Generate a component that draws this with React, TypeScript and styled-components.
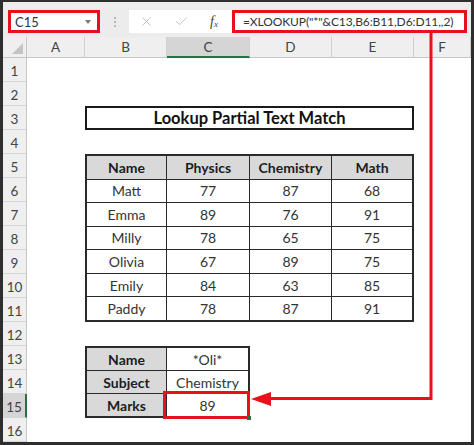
import React from 'react';
import styled, { createGlobalStyle } from 'styled-components';
import { X, Check, EllipsisVertical } from 'lucide-react';

const Global = createGlobalStyle`
  html, body { margin: 0; padding: 0; background: #2e2e2e; }
  body { font-family: Lato, "Open Sans", sans-serif; }
  * { box-sizing: border-box; }
`;

const Frame = styled.div`
  position: relative;
  width: 474px;
  height: 445px;
  padding: 2px 3px 3px 3px;
  background: #2e2e2e;
  display: flex;
  flex-direction: column;
`;

const Toolbar = styled.div`
  height: 35px;
  background: #ececec;
  display: flex;
  align-items: flex-start;
  padding: 8px 0 0 5px;
`;

const NameBox = styled.div`
  width: 92px;
  height: 23px;
  border: 3px solid #e8101a;
  background: #fff;
  display: flex;
  align-items: center;
  justify-content: space-between;
  padding: 0 6px 0 4px;
  font-size: 13px;
  color: #333;
`;

const Caret = styled.span`
  width: 0;
  height: 0;
  border-left: 3.5px solid transparent;
  border-right: 3.5px solid transparent;
  border-top: 4px solid #777;
`;

const Dots = styled.div`
  width: 29px;
  height: 23px;
  display: flex;
  align-items: center;
  justify-content: center;
  color: #b8b8b8;
`;

const FuncBox = styled.div`
  width: 103px;
  height: 23px;
  background: #fff;
  display: flex;
  align-items: center;
  padding-left: 10px;
  gap: 20px;
  color: #bdbdbd;
`;

const Fx = styled.span`
  font-family: "Liberation Serif", serif;
  font-style: italic;
  font-size: 14px;
  color: #444;
  margin-left: 1px;
  sub {
    font-size: 9px;
    vertical-align: -1px;
  }
`;

const FormulaBox = styled.div`
  width: 235px;
  height: 23px;
  border: 3px solid #e8101a;
  background: #fff;
  display: flex;
  align-items: center;
  padding-left: 8px;
  font-size: 12px;
  letter-spacing: -0.1px;
  color: #333;
  white-space: nowrap;
`;

const Sheet = styled.div`
  display: grid;
  grid-template-columns: 24px 58px 82px 83px 82px 82px 57px;
  grid-template-rows: 21px repeat(16, 24px);
  background: #fff;
`;

const ColHead = styled.div<{ $col: number; $sel?: boolean }>`
  grid-row: 1;
  grid-column: ${(p) => p.$col};
  background: ${(p) => (p.$sel ? '#d5d5d5' : '#efefef')};
  border-right: 1px solid #cfcfcf;
  border-bottom: ${(p) => (p.$sel ? '2px solid #217346' : '1px solid #c6c6c6')};
  display: flex;
  align-items: center;
  justify-content: center;
  font-size: 13.5px;
  color: #444;
`;

const Corner = styled.div`
  grid-row: 1;
  grid-column: 1;
  background: #efefef;
  border-right: 1px solid #c6c6c6;
  border-bottom: 1px solid #c6c6c6;
  display: flex;
  align-items: flex-end;
  justify-content: flex-end;
  padding: 0 3px 3px 0;
`;

const CornerTri = styled.span`
  width: 0;
  height: 0;
  border-left: 11px solid transparent;
  border-bottom: 11px solid #c4c4c4;
`;

const RowHead = styled.div<{ $row: number; $sel?: boolean }>`
  grid-column: 1;
  grid-row: ${(p) => p.$row + 1};
  background: ${(p) => (p.$sel ? '#d5d5d5' : '#efefef')};
  border-bottom: 1px solid #d4d4d4;
  border-right: ${(p) => (p.$sel ? '2px solid #217346' : '1px solid #c6c6c6')};
  display: flex;
  align-items: center;
  justify-content: center;
  font-size: 13.5px;
  color: #444;
  padding-top: 2px;
`;

const Title = styled.div`
  grid-column: 3 / 7;
  grid-row: 4;
  border: 2px solid #1a1a1a;
  display: flex;
  align-items: center;
  justify-content: center;
  font-weight: 700;
  font-size: 16.5px;
  color: #111;
`;

const Table = styled.div<{ $cols: string; $area: string }>`
  grid-area: ${(p) => p.$area};
  display: grid;
  grid-template-columns: ${(p) => p.$cols};
  grid-auto-rows: 1fr;
  gap: 1px;
  padding: 2px;
  background: #2a2a2a;
`;

const Cell = styled.div<{ $head?: boolean }>`
  background: ${(p) => (p.$head ? '#d9d9d9' : '#fff')};
  font-weight: ${(p) => (p.$head ? 700 : 400)};
  color: ${(p) => (p.$head ? '#1e1e1e' : '#333')};
  font-size: 14px;
  display: flex;
  align-items: center;
  justify-content: center;
`;

const Overlay = styled.svg`
  position: absolute;
  left: 0;
  top: 0;
  pointer-events: none;
`;

const heads = ['Name', 'Physics', 'Chemistry', 'Math'];
const rows: [string, number, number, number][] = [
  ['Matt', 77, 87, 68],
  ['Emma', 89, 76, 91],
  ['Milly', 78, 65, 75],
  ['Olivia', 67, 89, 75],
  ['Emily', 84, 63, 85],
  ['Paddy', 78, 87, 91],
];
const lookup: [string, string][] = [
  ['Name', '*Oli*'],
  ['Subject', 'Chemistry'],
  ['Marks', '89'],
];

export default function App() {
  return (
    <>
      <Global />
      <Frame>
        <Toolbar>
          <NameBox>
            <span>C15</span>
            <Caret />
          </NameBox>
          <Dots>
            <EllipsisVertical size={14} strokeWidth={2} />
          </Dots>
          <FuncBox>
            <X size={15} strokeWidth={1.5} />
            <Check size={15} strokeWidth={1.5} />
            <Fx>
              f<sub>x</sub>
            </Fx>
          </FuncBox>
          <FormulaBox>=XLOOKUP("*"&amp;C13,B6:B11,D6:D11,,2)</FormulaBox>
        </Toolbar>
        <Sheet>
          <Corner>
            <CornerTri />
          </Corner>
          {['A', 'B', 'C', 'D', 'E', 'F'].map((c, i) => (
            <ColHead key={c} $col={i + 2} $sel={c === 'C'}>
              {c}
            </ColHead>
          ))}
          {Array.from({ length: 16 }, (_, i) => (
            <RowHead key={i} $row={i + 1} $sel={i + 1 === 15}>
              {i + 1}
            </RowHead>
          ))}
          <Title>Lookup Partial Text Match</Title>
          <Table $area="6 / 3 / 13 / 7" $cols="79px 82px 81px 1fr">
            {heads.map((h) => (
              <Cell key={h} $head>
                {h}
              </Cell>
            ))}
            {rows.map((r) =>
              r.map((v, j) => <Cell key={r[0] + j}>{v}</Cell>)
            )}
          </Table>
          <Table $area="14 / 3 / 17 / 5" $cols="79px 1fr">
            {lookup.map(([k, v]) => (
              <React.Fragment key={k}>
                <Cell $head>{k}</Cell>
                <Cell>{v}</Cell>
              </React.Fragment>
            ))}
          </Table>
        </Sheet>
        <Overlay width={474} height={445} viewBox="0 0 474 445">
          <rect x={164.5} y={392.5} width={84} height={25} fill="none" stroke="#e8101a" strokeWidth={3} />
          <rect x={247} y={416} width={4} height={4} fill="#217346" />
          <polyline
            points="431,33 431,398.5 268,398.5"
            fill="none"
            stroke="#e8101a"
            strokeWidth={3}
          />
          <polygon points="251,399 271,392 271,406" fill="#e8101a" />
        </Overlay>
      </Frame>
    </>
  );
}
